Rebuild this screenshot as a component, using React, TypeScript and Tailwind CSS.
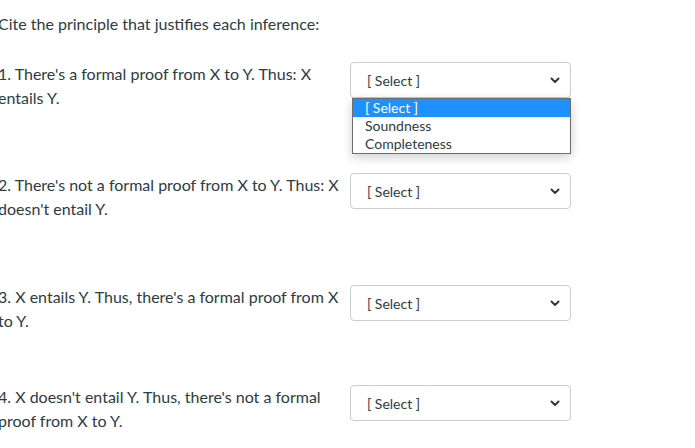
import { useState } from 'react';

const questions = [
  { text: "1. There's a formal proof from X to Y. Thus: X entails Y.", gap: 'mt-[26px]' },
  { text: "2. There's not a formal proof from X to Y. Thus: X doesn't entail Y.", gap: 'mt-[63px]' },
  { text: "3. X entails Y. Thus, there's a formal proof from X to Y.", gap: 'mt-[64px]' },
  { text: "4. X doesn't entail Y. Thus, there's not a formal proof from X to Y.", gap: 'mt-[52px]' },
];

const options = ['[ Select ]', 'Soundness', 'Completeness'];

function Chevron() {
  return (
    <svg width="10" height="7" viewBox="0 0 10 7" className="text-[#2d3b45]">
      <polyline points="1.5,1.5 5,5 8.5,1.5" fill="none" stroke="currentColor" strokeWidth="2" strokeLinecap="round" strokeLinejoin="round" />
    </svg>
  );
}

export default function App() {
  const [open] = useState(0);

  return (
    <div className="min-h-screen bg-white text-[#2d3b45] font-['Lato','Liberation_Sans',sans-serif] overflow-hidden">
      <div className="ml-[-2px] pt-[12px]">
        <p className="text-[16px] leading-[24px]">Cite the principle that justifies each inference:</p>

        {questions.map((q, i) => (
          <div key={i} className={`flex items-start ${q.gap}`}>
            <p className="w-[352px] pr-[6px] text-[16px] leading-[24px]">{q.text}</p>
            <div className="relative">
              <div className="w-[221px] h-[36px] flex items-center justify-between pl-[16px] pr-[10px] border border-[#c7cdd1] rounded-[4px] bg-white text-[14px]">
                <span>[ Select ]</span>
                <Chevron />
              </div>
              {open === i && (
                <div className="absolute left-[2px] top-[36px] w-[219px] z-10 bg-white border border-[#6d6d6d] shadow-[0_3px_10px_rgba(0,0,0,0.2)] text-[14px] leading-[18px]">
                  {options.map((o, j) => (
                    <div key={o} className={`pl-[12px] h-[18px] ${j === 0 ? 'bg-[#1e90ff] text-white' : 'text-[#2d3b45]'}`}>
                      {o}
                    </div>
                  ))}
                </div>
              )}
            </div>
          </div>
        ))}
      </div>
    </div>
  );
}
